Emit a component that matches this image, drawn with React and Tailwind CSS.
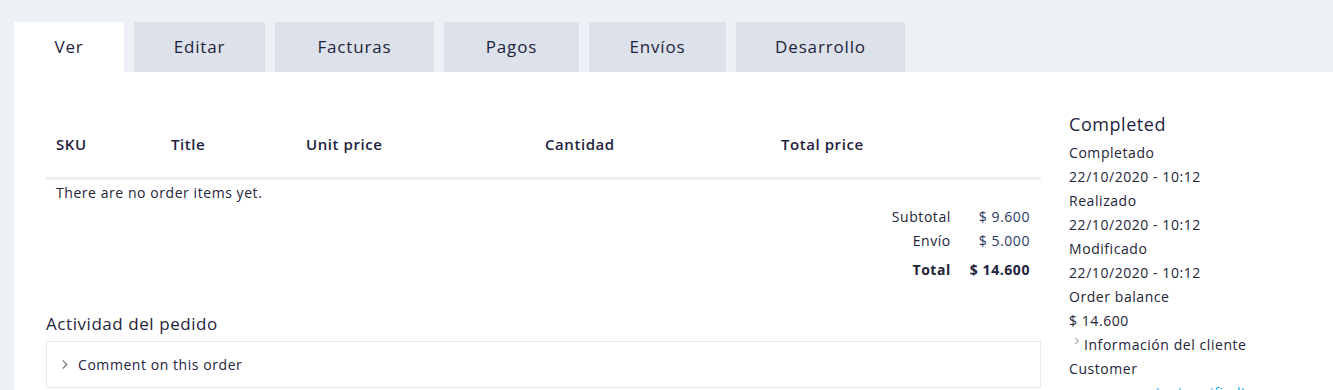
import React from "react";

const font = { fontFamily: '"Open Sans", "DejaVu Sans", sans-serif' };

function Tab({ label, active, w }) {
  return (
    <div
      className={`flex h-[50px] items-center justify-center text-[17px] tracking-[0.05em] text-[#221f3d] ${
        active ? "bg-white" : "bg-[#dce1ea]"
      } ${w}`}
    >
      {label}
    </div>
  );
}

function Chevron({ className }) {
  return (
    <svg viewBox="0 0 8 12" className={className} fill="none" stroke="currentColor" strokeWidth="1.2">
      <path d="M1.5 1.5 L6 6 L1.5 10.5" />
    </svg>
  );
}

export default function App() {
  return (
    <div className="min-h-[390px] bg-[#edf0f5] pl-[14px] pt-[22px] tracking-[0.035em] text-[#232438]" style={font}>
      <div className="flex gap-[10px]">
        <Tab label="Ver" active w="w-[110px]" />
        <Tab label="Editar" w="w-[131px]" />
        <Tab label="Facturas" w="w-[159px]" />
        <Tab label="Pagos" w="w-[135px]" />
        <Tab label="Envíos" w="w-[137px]" />
        <Tab label="Desarrollo" w="w-[169px]" />
      </div>
      <div className="flex gap-[28px] bg-white pl-[32px] pt-[40px] pb-[40px]">
        <div className="w-[995px] shrink-0">
          <div className="grid h-[68px] grid-cols-[115px_135px_239px_236px_1fr] items-center border-b-[3px] border-[#eceff4] text-[15px] font-semibold text-[#1f2340]">
            <div className="px-[10px]">SKU</div>
            <div className="px-[10px]">Title</div>
            <div className="px-[10px]">Unit price</div>
            <div className="px-[10px]">Cantidad</div>
            <div className="px-[10px]">Total price</div>
          </div>
          <div className="px-[10px] pt-[3px] text-[14px] leading-[20px]">There are no order items yet.</div>
          <div className="flex justify-end pr-[11px] pt-[2px]">
            <div className="grid grid-cols-[auto_auto] gap-x-[19px] text-right text-[14px] leading-[24px]">
              <div>Subtotal</div>
              <div className="text-[#2a3866]">$ 9.600</div>
              <div>Envío</div>
              <div className="text-[#2a3866]">$ 5.000</div>
              <div className="pt-[5px] font-bold">Total</div>
              <div className="pt-[5px] font-bold text-[#1f2340]">$ 14.600</div>
            </div>
          </div>
          <div className="mt-[30px] text-[17px] font-medium leading-[24px] text-[#1f2340]">Actividad del pedido</div>
          <div className="mt-[5px] flex h-[47px] items-center border border-[#e6e9ef] pl-[14px]">
            <Chevron className="h-[11px] w-[8px] text-[#7a6a66]" />
            <span className="ml-[9px] text-[14px] font-medium text-[#1f2340]">Comment on this order</span>
          </div>
        </div>
        <div className="flex-1 text-[14px] leading-[24px]">
          <div className="text-[18px] font-medium leading-[24px] text-[#1f2340]">Completed</div>
          <div className="mt-[5px]">Completado</div>
          <div>22/10/2020 - 10:12</div>
          <div>Realizado</div>
          <div>22/10/2020 - 10:12</div>
          <div>Modificado</div>
          <div>22/10/2020 - 10:12</div>
          <div>Order balance</div>
          <div>$ 14.600</div>
          <div className="flex items-start">
            <Chevron className="ml-[5px] mt-[4px] h-[8px] w-[6px] text-[#555]" />
            <span className="ml-[4px]">Información del cliente</span>
          </div>
          <div>Customer</div>
          <div className="text-[#0ea5e9]">anonymous (not verified)</div>
        </div>
      </div>
    </div>
  );
}
